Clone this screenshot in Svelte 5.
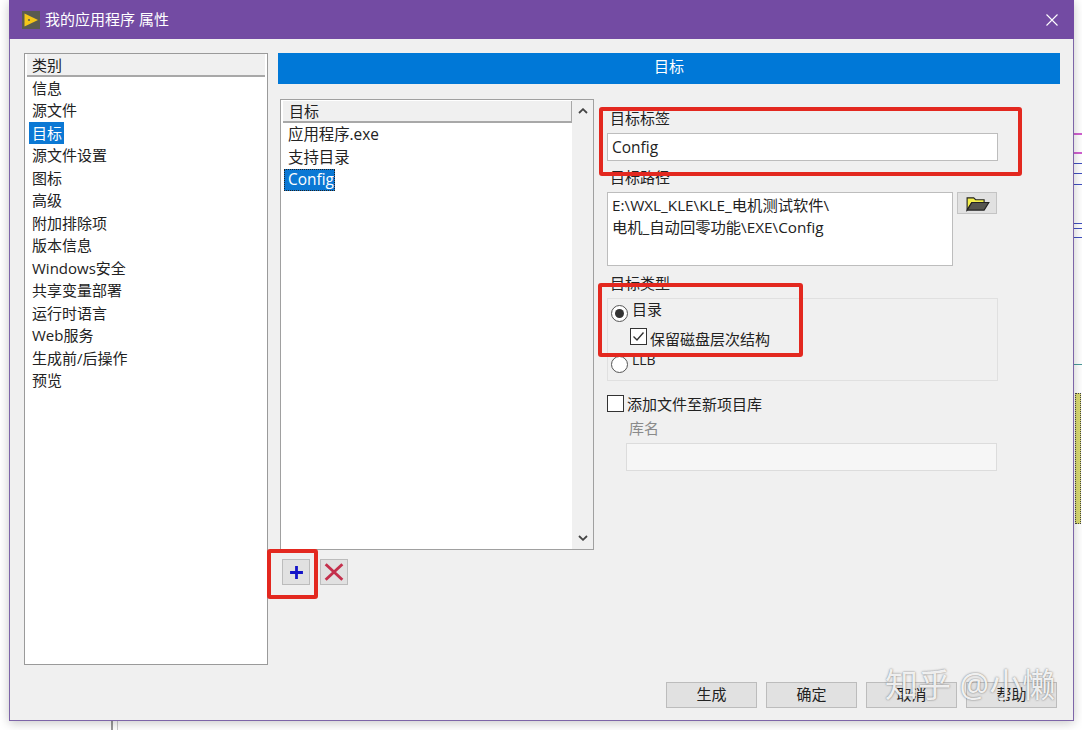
<script>
  const categories = ['信息', '源文件', '目标', '源文件设置', '图标', '高级', '附加排除项', '版本信息', 'Windows安全', '共享变量部署', '运行时语言', 'Web服务', '生成前/后操作', '预览']
  const targets = ['应用程序.exe', '支持目录', 'Config']
  const buttons = ['生成', '确定', '取消', '帮助']
</script>

<div class="desktop">
  <!-- bits of the window behind the dialog -->
  <div class="behind">
    <i class="stray" style="top:133px;height:2px;background:#d060d0"></i>
    <i class="stray" style="top:152px;height:2px;background:#d060d0"></i>
    <i class="stray" style="top:163px;height:1px;background:#4050c0"></i>
    <i class="stray" style="top:173px;height:1px;background:#4050c0"></i>
    <i class="stray" style="top:184px;height:1px;background:#4050c0"></i>
    <i class="stray" style="top:223px;height:1px;background:#4050c0"></i>
    <i class="stray" style="top:228px;height:1px;background:#4050c0"></i>
    <i class="stray" style="top:237px;height:1px;background:#4050c0"></i>
    <i class="stray" style="top:364px;height:1px;background:#4a9a9a"></i>
    <i class="stray dotted"></i>
    <i class="post"></i>
  </div>

  <div class="dialog">
    <header class="titlebar">
      <svg class="appicon" viewBox="0 0 18 18" width="18" height="18">
        <rect width="18" height="18" fill="#5a5a50" />
        <path d="M2.500 2.500 L16 9 L2.500 15.500 Z" fill="#f5c518" />
        <circle cx="7" cy="9" r="1.100" fill="#5a5a50" />
      </svg>
      <span class="title">我的应用程序 属性</span>
      <svg class="close" viewBox="0 0 12 12" width="12" height="12">
        <path d="M0.500 0.500 L11.500 11.500 M11.500 0.500 L0.500 11.500" stroke="#fff" stroke-width="1.100" fill="none" />
      </svg>
    </header>

    <div class="content">
      <aside class="catlist">
        <div class="colhead">类别</div>
        <ul>
          {#each categories as c}
            <li><span class:sel={c === '目标'}>{c}</span></li>
          {/each}
        </ul>
      </aside>

      <section class="page">
        <div class="banner">目标</div>
        <div class="columns">
          <div class="listcol">
            <div class="targets">
              <div class="tlist">
                <div class="colhead thead">目标</div>
                <ul>
                  {#each targets as t}
                    <li><span class:sel={t === 'Config'}>{t}</span></li>
                  {/each}
                </ul>
              </div>
              <div class="scroll">
                <svg viewBox="0 0 10 6" width="10" height="6"><path d="M1 5 L5 1.200 L9 5" stroke="#444" stroke-width="1.800" fill="none" /></svg>
                <svg viewBox="0 0 10 6" width="10" height="6"><path d="M1 1 L5 4.800 L9 1" stroke="#444" stroke-width="1.800" fill="none" /></svg>
              </div>
            </div>
            <div class="tools">
              <button class="tool">
                <svg viewBox="0 0 14 14" width="15" height="15"><path d="M7 1 V13 M1 7 H13" stroke="#1414c8" stroke-width="2.600" fill="none" /></svg>
              </button>
              <button class="tool">
                <svg viewBox="0 0 18 18" width="20" height="20"><path d="M1.500 2 L16.500 16 M16.500 2 L1.500 16" stroke="#c4304c" stroke-width="2.600" fill="none" /></svg>
              </button>
            </div>
          </div>

          <div class="form">
            <div class="lab first">目标标签</div>
            <div class="input single">Config</div>
            <div class="lab path">目标路径</div>
            <div class="pathrow">
              <div class="input multi">E:\WXL_KLE\KLE_电机测试软件\<br />电机_自动回零功能\EXE\Config</div>
              <button class="browse">
                <svg viewBox="0 0 26 18" width="25" height="17">
                  <path d="M2 16 V3 H9 L11 5 H20 V8 H7 L2 16 Z" fill="#f4f04a" stroke="#222" stroke-width="1.200" />
                  <path d="M2 16 L7 8 H25 L20 16 Z" fill="#55554e" stroke="#222" stroke-width="1.200" />
                </svg>
              </button>
            </div>
            <div class="lab type">目标类型</div>
            <div class="group">
              <div class="radio-row">
                <span class="radio on"></span><span>目录</span>
              </div>
              <div class="keep">
                <span class="check">
                  <svg viewBox="0 0 15 15" width="15" height="15"><path d="M2.500 7.500 L6 11 L12.500 3.500" stroke="#333" stroke-width="1.400" fill="none" /></svg>
                </span>
                <span>保留磁盘层次结构</span>
              </div>
              <div class="radio-row llb">
                <span class="radio"></span><span>LLB</span>
              </div>
            </div>
            <div class="addlib">
              <span class="check"></span>
              <span>添加文件至新项目库</span>
            </div>
            <div class="libname">库名</div>
            <div class="input disabled"></div>
          </div>
        </div>
      </section>
    </div>

    <footer class="actions">
      {#each buttons as b}
        <button class="act">{b}</button>
      {/each}
    </footer>
  </div>

  <!-- red annotations and watermark drawn over the shot -->
  <div class="mark" style="left:599px;top:107px;width:415px;height:61px"></div>
  <div class="mark" style="left:598px;top:283px;width:197px;height:66px"></div>
  <div class="mark" style="left:267px;top:549px;width:43px;height:42px"></div>
  <div class="watermark">知乎 @小懒</div>
</div>

<style>
  :global(body) {
    margin: 0;
    background: #fff;
    font-family: "Open Sans", "Noto Sans CJK SC", sans-serif;
    font-size: 15px;
    color: #222;
  }
  .desktop {
    position: relative;
    width: 1082px;
    height: 730px;
    overflow: hidden;
    padding: 0 9px;
    box-sizing: border-box;
  }
  .stray {
    position: absolute;
    left: 1074px;
    width: 8px;
  }
  .dotted {
    top: 393px;
    height: 131px;
    width: 6px;
    left: 1075px;
    background: #d8d870;
    border: 1px dotted #444;
    box-sizing: border-box;
  }
  .post {
    position: absolute;
    left: 111px;
    top: 720px;
    width: 7px;
    height: 10px;
    border-left: 2px solid #999;
    border-right: 1px solid #ccc;
    box-sizing: border-box;
  }
  .dialog {
    position: relative;
    width: 1065px;
    height: 721px;
    background: #f0f0f0;
    border: 1px solid #7d65a8;
    border-top: 0;
    box-sizing: border-box;
    box-shadow: 0 2px 10px rgba(0, 0, 0, 0.22);
    display: flex;
    flex-direction: column;
  }
  .titlebar {
    height: 39px;
    flex: none;
    margin: 0 -1px;
    background: #734ba3;
    color: #fff;
    display: flex;
    align-items: center;
    padding: 0 16px 0 13px;
    font-size: 15px;
  }
  .appicon {
    margin-right: 5px;
  }
  .title {
    flex: 1;
    margin-top: -3px;
  }
  .content {
    display: flex;
    padding: 14px 13px 0 14px;
    height: 612px;
    flex: none;
    gap: 10px;
  }
  ul {
    list-style: none;
    margin: 0;
    padding: 0;
  }
  .catlist {
    width: 244px;
    box-sizing: border-box;
    background: #fff;
    border: 1px solid #9a9a9a;
    flex: none;
  }
  .colhead {
    background: #f0f0f0;
    height: 22px;
    line-height: 23px;
    padding-left: 7px;
    margin: 0 2px;
    border-bottom: 2px solid #a8a8a8;
    box-sizing: content-box;
  }
  .catlist .colhead {
    padding-left: 5px;
    height: 21px;
  }
  .catlist ul {
    padding: 0 0 0 4px;
    margin-top: -0.500px;
  }
  li {
    height: 22.500px;
    line-height: 22px;
    padding-left: 3px;
    white-space: nowrap;
  }
  .catlist li span {
    display: inline-block;
    padding: 0 2px 0 3px;
    margin-left: -3px;
  }
  .sel {
    background: #0b78d4;
    color: #fff;
  }
  .page {
    flex: 1;
    display: flex;
    flex-direction: column;
    min-width: 0;
  }
  .banner {
    height: 31px;
    line-height: 26px;
    background: #0078d7;
    color: #fff;
    text-align: center;
    flex: none;
  }
  .columns {
    display: flex;
    margin-top: 15px;
    padding-left: 2px;
  }
  .listcol {
    width: 314px;
    flex: none;
  }
  .targets {
    height: 451px;
    background: #fff;
    border: 1px solid #a0a0a0;
    box-sizing: border-box;
    display: flex;
  }
  .tlist {
    flex: 1;
  }
  .thead {
    margin: 1px 0 0 2px;
    height: 20px;
    line-height: 20px;
    padding-left: 6px;
    border-right: 1px solid #a8a8a8;
  }
  .tlist ul {
    padding-left: 3px;
    margin-top: 1px;
  }
  .tlist li {
    padding-left: 4px;
    font-size: 15.400px;
  }
  .tlist li span {
    display: inline-block;
    padding: 0 1px 0 4px;
    margin-left: -4px;
    outline: 1px dotted #222;
    outline-offset: -1px;
  }
  .tlist li span:not(.sel) {
    outline: none;
  }
  .scroll {
    width: 21px;
    background: #f0f0f0;
    display: flex;
    flex-direction: column;
    justify-content: space-between;
    align-items: center;
    padding: 8px 0;
    box-sizing: border-box;
    flex: none;
  }
  .tools {
    display: flex;
    gap: 10px;
    margin-top: 9px;
    padding-left: 2px;
  }
  .tool {
    width: 28px;
    height: 26px;
    padding: 0;
    border: 1px solid #bcbcbc;
    background: #e1e1e1;
    display: flex;
    align-items: center;
    justify-content: center;
  }
  .form {
    padding-left: 13px;
    width: 391px;
    flex: none;
    box-sizing: content-box;
  }
  .lab {
    height: 22px;
    line-height: 22px;
    padding-left: 3px;
  }
  .lab.first {
    margin-top: 8px;
  }
  .lab.path {
    margin-top: 5px;
  }
  .lab.type {
    margin-top: 6px;
  }
  .input {
    background: #fff;
    border: 1px solid #bdbdbd;
    box-sizing: border-box;
    padding: 0 4px;
  }
  .single {
    height: 28px;
    line-height: 26px;
    width: 391px;
    margin-top: 4px;
    font-size: 15.500px;
  }
  .multi {
    width: 346px;
    height: 74px;
    font-size: 15.300px;
    line-height: 22px;
    padding-top: 1px;
    flex: none;
    white-space: nowrap;
  }
  .pathrow {
    display: flex;
    gap: 4px;
    margin-top: 4px;
    align-items: flex-start;
  }
  .browse {
    width: 40px;
    height: 22px;
    padding: 0;
    border: 1px solid #c4c4c4;
    background: #e1e1e1;
    display: flex;
    align-items: center;
    justify-content: center;
    flex: none;
  }
  .group {
    width: 391px;
    height: 83px;
    box-sizing: border-box;
    border: 1px solid #e0e0e0;
    margin-top: 4px;
    position: relative;
  }
  .radio-row {
    display: flex;
    align-items: center;
    gap: 4px;
    height: 22px;
    margin-left: 3px;
    margin-top: -2px;
  }
  .radio {
    width: 17px;
    height: 17px;
    border: 1px solid #555;
    border-radius: 50%;
    background: #fff;
    box-sizing: border-box;
    position: relative;
    top: 5px;
    flex: none;
  }
  .radio.on::after {
    content: '';
    position: absolute;
    left: 3px;
    top: 3px;
    width: 9px;
    height: 9px;
    border-radius: 50%;
    background: #333;
  }
  .keep {
    display: flex;
    align-items: center;
    gap: 3px;
    margin: 8px 0 0 22px;
    height: 22px;
  }
  .keep .check {
    position: relative;
    top: -2px;
  }
  .check {
    width: 17px;
    height: 17px;
    border: 1px solid #333;
    background: #fff;
    box-sizing: border-box;
    flex: none;
    display: block;
  }
  .check svg {
    display: block;
  }
  .llb {
    margin-top: 0;
    font-size: 14px;
    height: 20px;
  }
  .addlib {
    display: flex;
    align-items: center;
    gap: 3px;
    margin-top: 11px;
    height: 22px;
  }
  .libname {
    color: #8a8a8a;
    margin: 3px 0 0 22px;
    height: 22px;
    line-height: 22px;
  }
  .disabled {
    margin: 4px 0 0 19px;
    width: 371px;
    height: 28px;
    background: #f6f6f6;
    border-color: #dcdcdc;
  }
  .actions {
    display: flex;
    justify-content: flex-end;
    gap: 9px;
    padding: 17px 16px 0 0;
  }
  .act {
    width: 91px;
    height: 26px;
    padding: 0 0 3px;
    border: 1px solid #bcbcbc;
    background: #e1e1e1;
    font: inherit;
    font-size: 15px;
    color: #222;
  }
  .mark {
    position: absolute;
    border: 4px solid #e3281f;
    border-radius: 3px;
  }
  .watermark {
    position: absolute;
    left: 885px;
    top: 663px;
    font-size: 33px;
    line-height: 44px;
    color: rgba(255, 255, 255, 0.9);
    text-shadow: 0 0 2px rgba(70, 70, 70, 0.8);
    white-space: nowrap;
  }
</style>
